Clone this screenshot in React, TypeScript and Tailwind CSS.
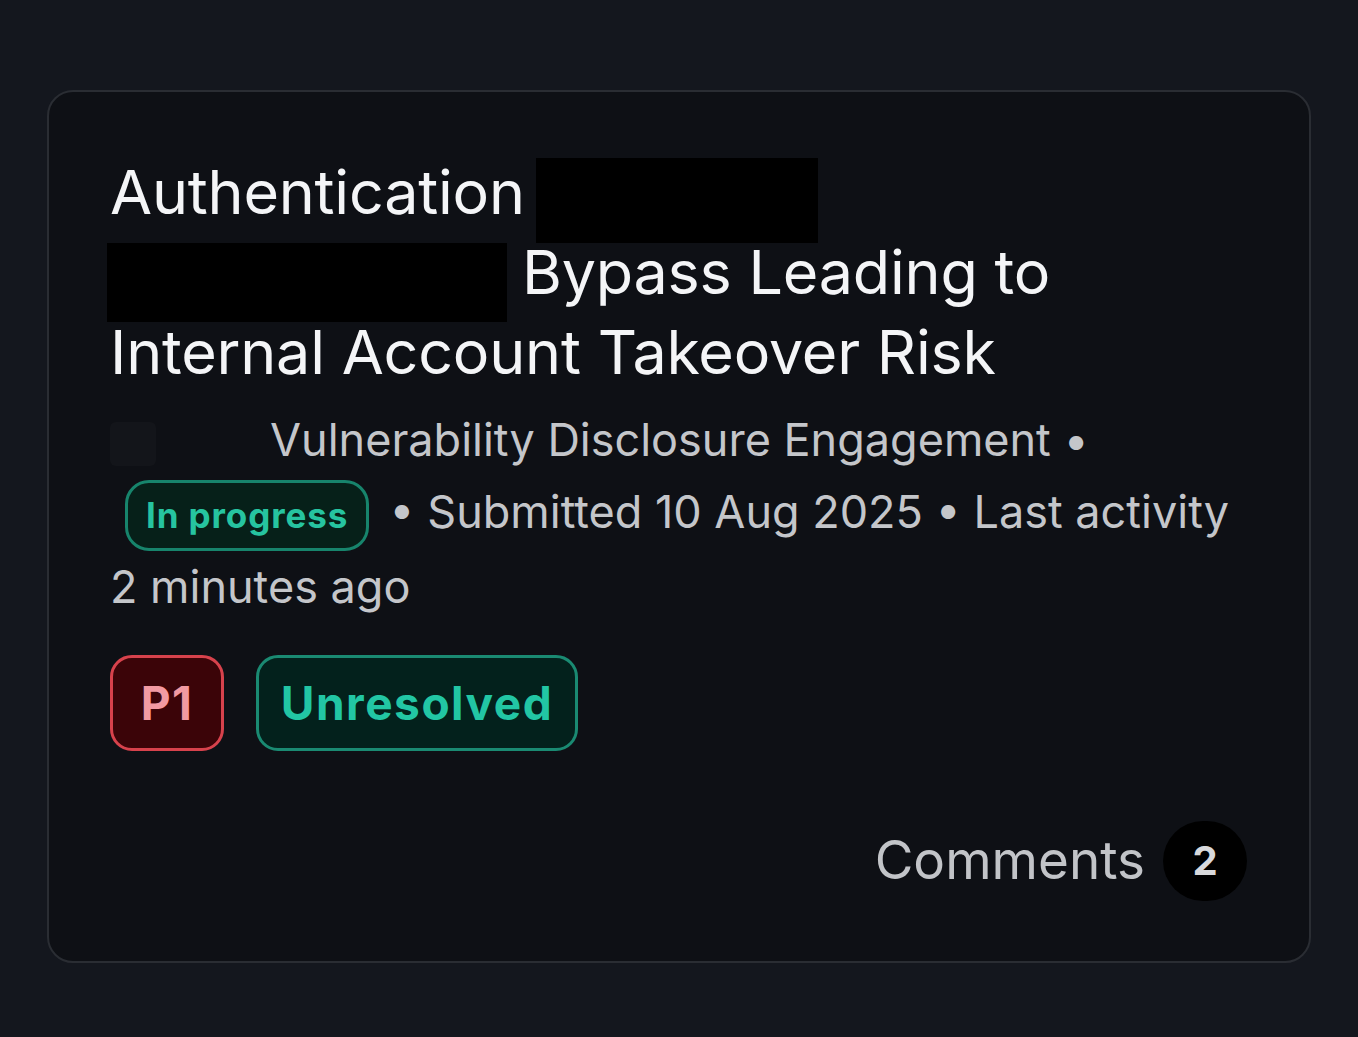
import React from 'react';

const ReportCard: React.FC = () => {
    return (
        <div className="rounded-[26px] border-2 border-[#2a2d33] bg-[#0e1015] pl-[61px] pr-[62px] pt-[61px] pb-[60px]">
            <h1 className="text-[61px] font-normal text-[#f4f5f7] tracking-[-0.2px]">
                <div className="flex h-[80px] items-center">
                    <span>Authentication</span>
                    <span className="ml-[11px] self-start mt-[5px] h-[85px] w-[282px] bg-black" />
                </div>
                <div className="flex h-[80px] items-center">
                    <span className="-ml-[3px] mr-[15px] self-start mt-[10px] h-[79px] w-[400px] bg-black" />
                    <span>Bypass Leading to</span>
                </div>
                <div className="flex h-[80px] items-center">
                    <span>Internal Account Takeover Risk</span>
                </div>
            </h1>

            <div className="mt-[11px] text-[45px] leading-[72px] text-[#c4c6ca]">
                <span className="inline-flex align-middle w-[160px] h-[50px] items-center">
                    <span className="w-[46px] h-[44px] rounded-md bg-[#15171c] opacity-80" />
                </span>
                Vulnerability Disclosure Engagement •{' '}
                <span className="inline-flex items-center h-[71px] px-[18px] ml-[15px] mr-[20px] rounded-[24px] border-[3px] border-[#17846c] bg-[#062019] text-[35px] leading-none font-bold text-[#26c4a0] tracking-[0.9px] align-middle">
                    In progress
                </span>
                • Submitted 10 Aug 2025 • Last activity 2 minutes ago
            </div>

            <div className="mt-[32px] flex items-center gap-[32px]">
                <span className="flex items-center justify-center h-[96px] w-[114px] rounded-[22px] border-[3px] border-[#d7424c] bg-[#3b0408] text-[46px] font-bold text-[#f29aa2] tracking-[1.5px]">
                    P1
                </span>
                <span className="flex items-center justify-center h-[96px] w-[322px] rounded-[22px] border-[3px] border-[#1a8a72] bg-[#03211c] text-[46px] font-bold text-[#22c6a4] tracking-[1.5px]">
                    Unresolved
                </span>
            </div>

            <div className="mt-[70px] flex items-center justify-end gap-[18px]">
                <span className="text-[53px] text-[#c2c4c8]">Comments</span>
                <span className="flex items-center justify-center w-[84px] h-[80px] rounded-full bg-black text-[40px] font-bold text-[#d8d9dc]">
                    2
                </span>
            </div>
        </div>
    );
};

export default function App() {
    return (
        <div className="min-h-[1037px] bg-[#14171e] px-[47px] pt-[90px]" style={{ fontFamily: 'Inter, "Noto Sans", sans-serif' }}>
            <ReportCard />
        </div>
    );
}
